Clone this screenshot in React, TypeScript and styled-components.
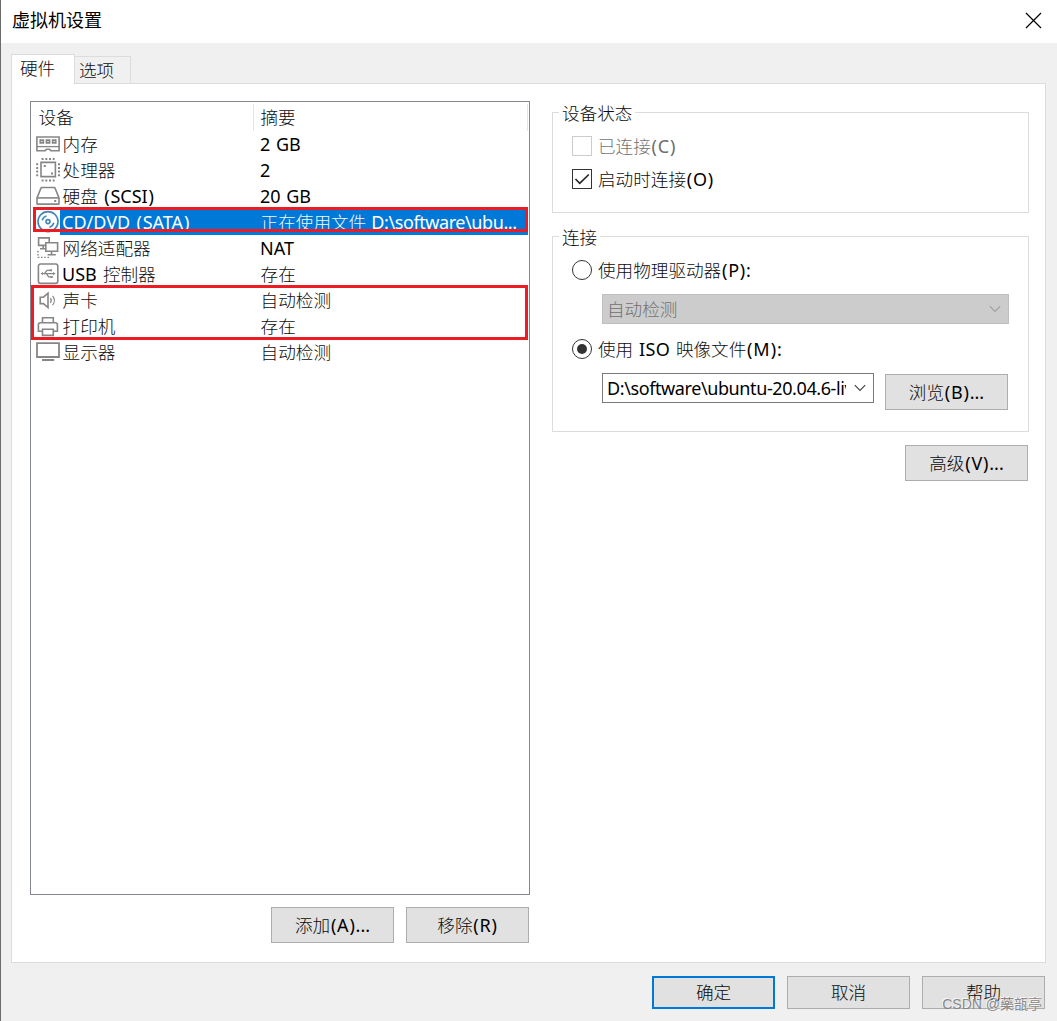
import React from 'react';
import styled, { createGlobalStyle, css } from 'styled-components';

const GlobalStyle = createGlobalStyle`
  * { box-sizing: border-box; }
  body {
    margin: 0;
    background: #f0f0f0;
    font-family: "Noto Sans", "Noto Sans CJK SC", sans-serif;
    font-size: 18px;
    color: #000;
  }
`;

/* ---------- mixed-script text ---------- */

const TextLine = styled.span`
  display: inline-block;
  white-space: pre;
  line-height: 26px;
`;

const Han = styled.span`
  font-family: "Noto Sans CJK SC", sans-serif;
  font-size: 17.6px;
  font-weight: 300;
  opacity: 0.95;
`;

const Latin = styled.span<{ $tracking: number }>`
  font-family: "Noto Sans", sans-serif;
  font-size: 18px;
  letter-spacing: ${(p) => p.$tracking}px;
  word-spacing: 0.9px;
`;

const Paren = styled.span`
  font-family: "Noto Sans", sans-serif;
  font-size: 18px;
  padding: 0 0.8px;
`;

function Label({ children, tracking = 0 }: { children: string; tracking?: number }) {
  const parts = children.match(/[\u3400-\u9fff]+|[()]|[^\u3400-\u9fff()]+/g) ?? [];
  return (
    <TextLine>
      {parts.map((part, i) => {
        if (/[\u3400-\u9fff]/.test(part)) return <Han key={i}>{part}</Han>;
        if (/[()]/.test(part)) return <Paren key={i}>{part}</Paren>;
        return <Latin key={i} $tracking={tracking}>{part}</Latin>;
      })}
    </TextLine>
  );
}

/* ---------- window ---------- */

const Window = styled.div`
  position: relative;
  width: 1057px;
  height: 1021px;
  border-left: 1px solid #6b6b6b;
  background: #f0f0f0;
  display: flex;
  flex-direction: column;
  overflow: hidden;
`;

const TitleBar = styled.header`
  height: 43px;
  flex: none;
  padding: 0 15px 2px 11px;
  background: #fff;
  display: flex;
  align-items: center;
  justify-content: space-between;
`;

const Title = styled.span`
  padding-bottom: 3px;
  font-family: "Noto Sans CJK SC", sans-serif;
  font-size: 18px;
`;

const TabStrip = styled.nav`
  display: flex;
  align-items: flex-end;
  height: 40px;
  flex: none;
  padding-left: 10px;
`;

const Tab = styled.div<{ $active?: boolean }>`
  border: 1px solid #dcdcdc;
  border-bottom: 0;
  display: flex;
  align-items: center;
  ${(p) =>
    p.$active
      ? css`
          width: 64px;
          height: 30px;
          margin-bottom: -1px;
          padding: 0 0 3px 8px;
          background: #fff;
          z-index: 1;
        `
      : css`
          width: 56px;
          height: 27px;
          border-left: 0;
          padding: 0 0 1px 4px;
        `}
`;

const Page = styled.main`
  width: 1035px;
  height: 880px;
  flex: none;
  margin-left: 10px;
  border: 1px solid #dcdcdc;
  background: #fff;
  display: flex;
  padding: 17px 16px 0 18px;
  gap: 22px;
`;

const DevicePane = styled.section`
  width: 500px;
  display: flex;
  flex-direction: column;
  gap: 12px;
`;

const DeviceList = styled.div`
  position: relative;
  height: 794px;
  border: 1px solid #828790;
  background: #fff;
`;

const HeaderRow = styled.div`
  display: flex;
  height: 29px;
  padding: 2px 1px 0 0;
`;

const HeaderCell = styled.div<{ $width: number; $pad: number }>`
  width: ${(p) => p.$width}px;
  height: 27px;
  padding-left: ${(p) => p.$pad}px;
  border-right: 1px solid #e5e5e5;
`;

const Row = styled.div`
  display: flex;
  height: 26px;
  ${Han} { margin-left: 0.6px; }
`;

const IconCell = styled.div`
  width: 29px;
  padding: 1px 0 0 5px;
  svg { display: block; }
`;

const RowText = styled.div<{ $selected?: boolean }>`
  display: flex;
  width: 468px;
  padding-left: 2px;
  ${(p) => p.$selected && css`background: #0078d7; color: #fff;`}
`;

const NameCell = styled.div`
  width: 198px;
`;

const MarkBox = styled.div<{ $x: number; $y: number; $w: number; $h: number }>`
  position: absolute;
  left: ${(p) => p.$x}px;
  top: ${(p) => p.$y}px;
  width: ${(p) => p.$w}px;
  height: ${(p) => p.$h}px;
  border: 3px solid #ed1c24;
`;

/* ---------- controls ---------- */

const Button = styled.button<{ $primary?: boolean; $height?: number }>`
  width: 123px;
  height: ${(p) => p.$height ?? 36}px;
  flex: none;
  padding: 2px 0 0;
  border: ${(p) => (p.$primary ? '2px solid #0078d7' : '1px solid #adadad')};
  background: #e1e1e1;
  color: #000;
  display: flex;
  align-items: center;
  justify-content: center;
`;

const ButtonRow = styled.div`
  display: flex;
  justify-content: flex-end;
  gap: 12px;
  padding-right: 1px;
`;

const SettingsPane = styled.section`
  width: 477px;
  display: flex;
  flex-direction: column;
`;

const Group = styled.fieldset<{ $height: number }>`
  margin: 0 0 12px;
  padding: 0;
  min-width: 0;
  height: ${(p) => p.$height}px;
  border: 1px solid #dcdcdc;
`;

const Legend = styled.legend`
  height: 22px;
  margin-left: 6px;
  padding: 0 3px;
  ${TextLine} { line-height: 23px; }
`;

const StatusBody = styled.div`
  padding: 10px 0 0 19px;
  display: flex;
  flex-direction: column;
  gap: 7px;
`;

const ConnectBody = styled.div`
  padding: 10px 19px 0 19px;
  display: flex;
  flex-direction: column;
`;

const Option = styled.label<{ $disabled?: boolean }>`
  display: flex;
  align-items: center;
  height: 26px;
  gap: 6px;
  color: ${(p) => (p.$disabled ? '#6d6d6d' : '#000')};
`;

const CheckMarkBox = styled.span<{ $disabled?: boolean }>`
  width: 20px;
  height: 20px;
  border: 1px solid ${(p) => (p.$disabled ? '#cccccc' : '#333')};
  svg { display: block; }
`;

const RadioMark = styled.span<{ $checked?: boolean }>`
  width: 20px;
  height: 20px;
  border: 1px solid #333;
  border-radius: 50%;
  display: grid;
  place-items: center;
  &::after {
    content: "";
    width: 10px;
    height: 10px;
    border-radius: 50%;
    background: ${(p) => (p.$checked ? '#333' : 'transparent')};
  }
`;

const Combo = styled.div<{ $width: number; $disabled?: boolean }>`
  width: ${(p) => p.$width}px;
  height: 30px;
  flex: none;
  padding: 0 7px 0 4px;
  border: 1px solid ${(p) => (p.$disabled ? '#bfbfbf' : '#7a7a7a')};
  background: ${(p) => (p.$disabled ? '#cccccc' : '#fff')};
  color: ${(p) => (p.$disabled ? '#6d6d6d' : '#000')};
  display: flex;
  align-items: center;
  justify-content: space-between;
`;

const ComboText = styled.div`
  max-width: 239px;
  overflow: hidden;
  height: 26px;
`;

const ComboLine = styled.div<{ $after?: number }>`
  display: flex;
  align-items: flex-start;
  gap: 11px;
  padding: 11px 0 ${(p) => p.$after ?? 0}px 30px;
  ${Button} { margin-top: 1px; }
`;

const Advanced = styled.div`
  display: flex;
  justify-content: flex-end;
  padding: 1px 1px 0 0;
`;

const Footer = styled.footer`
  display: flex;
  justify-content: flex-end;
  gap: 12px;
  padding: 13px 12px 0 0;
`;

const Watermark = styled.div`
  position: absolute;
  right: 15px;
  bottom: 7px;
  font-family: "Liberation Sans", "Noto Sans CJK SC", sans-serif;
  font-size: 14px;
  line-height: 20px;
  color: rgba(125, 125, 125, 0.9);
  text-shadow: -1px -1px 0 rgba(255, 255, 255, 0.75);
  white-space: pre;
`;

/* ---------- icons ---------- */

const Icon = ({ children, stroke = '#868686' }: { children: React.ReactNode; stroke?: string }) => (
  <svg width="24" height="24" viewBox="0 0 24 24" fill="none" stroke={stroke} strokeWidth="1.6">
    {children}
  </svg>
);

const MemoryIcon = () => (
  <Icon>
    <path d="M.9 5h22.2v13.8h-8.3l-1.2-1.6h-3.2l-1.2 1.6H.9z" />
    <path d="M4.3 8.2h3v2.6h-3zM10.5 8.2h3v2.6h-3zM16.7 8.2h3v2.6h-3z" strokeWidth="1.8" />
    <path d="M1 14.6h22" strokeWidth="1.3" />
  </Icon>
);

const CpuIcon = () => (
  <Icon>
    <path d="M5 4.4h14.4v14.2H5z" />
    <path d="M5.6 1h13M5.6 22.6h13" strokeDasharray="2 1.7" strokeWidth="2" />
    <path d="M1.2 5.2v13M23 5.2v13" strokeDasharray="2 1.7" strokeWidth="2" />
    <path d="M7.8 7.9h2M15 15.4h2" strokeWidth="2" />
  </Icon>
);

const DiskIcon = () => (
  <Icon>
    <path d="M5.2 3.5h13.6l4.2 10.4v6.2H1v-6.2z" strokeLinejoin="round" />
    <path d="M1 13.9h22" />
    <path d="M18.2 17h2" strokeWidth="2" />
  </Icon>
);

const DiscIcon = () => (
  <Icon stroke="#3f84ba">
    <circle cx="12" cy="11.6" r="10" />
    <circle cx="12" cy="11.6" r="2" />
    <path d="M6.2 10.4a6.2 6.2 0 0 1 4.4-4.5M17.8 12.8a6.2 6.2 0 0 1-4.4 4.5" strokeWidth="1.5" />
  </Icon>
);

const NetworkIcon = () => (
  <Icon>
    <path d="M9 9.4H2.6V1.9h10.6v4.2" />
    <path d="M9.8 6.8h11.8v8.5H9.8z" />
    <path d="M7.2 9.6v3.2M4 12.8h5.4M15.6 15.6v3M11.6 18.8h8.2" />
    <path d="M2 14.8v6.6h11" strokeDasharray="1.6 1.6" strokeWidth="1.4" />
  </Icon>
);

const UsbIcon = () => (
  <Icon>
    <rect x="2.4" y="2" width="19.4" height="19.4" rx="2.2" />
    <path d="M6 11.6h11.5M8.4 11.6l2.6-3.3h3M10.4 11.6l2.2 3.3h2.4" strokeWidth="1.3" />
    <path d="M4.6 11.6l2.4-1.7v3.4zM17 9.9l2.6 1.7-2.6 1.7zM13.8 7.2H16v2.1h-2.2zM14.6 13.9h2.1V16h-2.1z" fill="#868686" stroke="none" />
  </Icon>
);

const SoundIcon = () => (
  <Icon>
    <path d="M4.2 9.2h3.2l4.6-4v14.4l-4.6-4H4.2z" />
    <path d="M14.4 10.2a4 4 0 0 1 0 4.6M16.6 7.8a7.4 7.4 0 0 1 0 9.4" strokeWidth="1.3" />
  </Icon>
);

const PrinterIcon = () => (
  <Icon>
    <path d="M6.5 8.8V3.8h10.8v5" />
    <path d="M6 17.2H2.4v-6.4c0-1.3.7-2 2-2h15c1.3 0 2 .7 2 2v6.4h-3.6" />
    <path d="M6.5 15.2h10.8v6.2H6.5z" />
  </Icon>
);

const DisplayIcon = () => (
  <Icon>
    <path d="M1 3.2h22v13.8H1z" strokeWidth="1.8" />
    <path d="M6 20h12.2" strokeWidth="2" />
  </Icon>
);

const Chevron = ({ color }: { color: string }) => (
  <svg width="12" height="8" viewBox="0 0 12 8" fill="none" stroke={color} strokeWidth="1.2">
    <path d="M.8 1.2 6 6.4l5.2-5.2" />
  </svg>
);

/* ---------- data ---------- */

const devices = [
  { icon: <MemoryIcon />, name: '内存', summary: '2 GB' },
  { icon: <CpuIcon />, name: '处理器', summary: '2' },
  { icon: <DiskIcon />, name: '硬盘 (SCSI)', summary: '20 GB' },
  {
    icon: <DiscIcon />,
    name: 'CD/DVD (SATA)',
    summary: '正在使用文件 D:\\software\\ubu...',
    tracking: -0.42,
    selected: true,
  },
  { icon: <NetworkIcon />, name: '网络适配器', summary: 'NAT' },
  { icon: <UsbIcon />, name: 'USB 控制器', summary: '存在' },
  { icon: <SoundIcon />, name: '声卡', summary: '自动检测' },
  { icon: <PrinterIcon />, name: '打印机', summary: '存在' },
  { icon: <DisplayIcon />, name: '显示器', summary: '自动检测' },
];

export default function App() {
  return (
    <Window>
      <GlobalStyle />
      <TitleBar>
        <Title>虚拟机设置</Title>
        <svg width="17" height="17" viewBox="0 0 17 17" stroke="#000" strokeWidth="1.2">
          <path d="M1 1l15 15M16 1L1 16" />
        </svg>
      </TitleBar>

      <TabStrip>
        <Tab $active><Label>硬件</Label></Tab>
        <Tab><Label>选项</Label></Tab>
      </TabStrip>

      <Page>
        <DevicePane>
          <DeviceList>
            <HeaderRow>
              <HeaderCell $width={223} $pad={7.5}><Label>设备</Label></HeaderCell>
              <HeaderCell $width={274} $pad={6.5}><Label>摘要</Label></HeaderCell>
            </HeaderRow>
            {devices.map((d) => (
              <Row key={d.name}>
                <IconCell>{d.icon}</IconCell>
                <RowText $selected={d.selected}>
                  <NameCell><Label>{d.name}</Label></NameCell>
                  <Label tracking={d.tracking}>{d.summary}</Label>
                </RowText>
              </Row>
            ))}
            <MarkBox $x={2} $y={105} $w={495} $h={25} />
            <MarkBox $x={0} $y={183} $w={497} $h={55} />
          </DeviceList>
          <ButtonRow>
            <Button><Label>添加(A)...</Label></Button>
            <Button><Label>移除(R)</Label></Button>
          </ButtonRow>
        </DevicePane>

        <SettingsPane>
          <Group $height={112}>
            <Legend><Label>设备状态</Label></Legend>
            <StatusBody>
              <Option $disabled>
                <CheckMarkBox $disabled />
                <Label>已连接(C)</Label>
              </Option>
              <Option>
                <CheckMarkBox>
                  <svg width="18" height="18" viewBox="0 0 18 18" fill="none" stroke="#222" strokeWidth="1.6">
                    <path d="M2.5 9l4.2 4.3L15.8 4.5" />
                  </svg>
                </CheckMarkBox>
                <Label>启动时连接(O)</Label>
              </Option>
            </StatusBody>
          </Group>

          <Group $height={207}>
            <Legend><Label>连接</Label></Legend>
            <ConnectBody>
              <Option>
                <RadioMark />
                <Label>使用物理驱动器(P):</Label>
              </Option>
              <ComboLine $after={12}>
                <Combo $width={407} $disabled>
                  <ComboText><Label>自动检测</Label></ComboText>
                  <Chevron color="#a0a0a0" />
                </Combo>
              </ComboLine>
              <Option>
                <RadioMark $checked />
                <Label tracking={0.3}>使用 ISO 映像文件(M):</Label>
              </Option>
              <ComboLine>
                <Combo $width={272}>
                  <ComboText><Label tracking={-0.4}>D:\software\ubuntu-20.04.6-live</Label></ComboText>
                  <Chevron color="#444" />
                </Combo>
                <Button><Label>浏览(B)...</Label></Button>
              </ComboLine>
            </ConnectBody>
          </Group>

          <Advanced>
            <Button><Label>高级(V)...</Label></Button>
          </Advanced>
        </SettingsPane>
      </Page>

      <Footer>
        <Button $primary $height={33}><Label>确定</Label></Button>
        <Button $height={33}><Label>取消</Label></Button>
        <Button $height={33}><Label>帮助</Label></Button>
      </Footer>
      <Watermark>CSDN @藥瓿亭</Watermark>
    </Window>
  );
}
